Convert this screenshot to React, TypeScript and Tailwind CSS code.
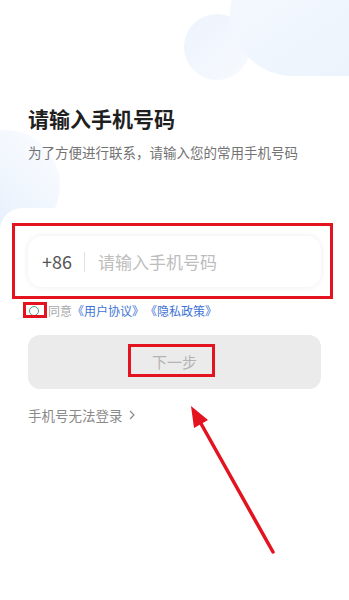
import React from "react";

const font = { fontFamily: '"Noto Sans CJK SC", "Noto Sans", sans-serif' };

export default function App() {
  return (
    <div
      className="relative w-[349px] h-[600px] overflow-hidden bg-white"
      style={font}
    >
      {/* background blobs */}
      <div className="absolute left-[184px] top-[14px] h-[66px] w-[66px] rounded-full bg-gradient-to-br from-[#edf3fd] to-[#f7fafe]" />
      <div className="absolute left-[230px] top-[-50px] h-[126px] w-[190px] rounded-full bg-gradient-to-br from-[#f6fafe] to-[#eaf2fc]" />
      <div className="absolute left-[-50px] top-[130px] h-[110px] w-[110px] rounded-full bg-gradient-to-tr from-[#dbe8fb] via-[#eff5fd] to-[#fbfdff]" />

      <div className="relative px-7 pt-[104px]">
        <h1 className="text-[21px] leading-7 font-bold text-[#1f1f1f]">
          请输入手机号码
        </h1>
        <p className="mt-[10px] text-[13.5px] leading-5 text-[#737373]">
          为了方便进行联系，请输入您的常用手机号码
        </p>
      </div>

      <div className="relative mt-[46px] rounded-tl-[22px] bg-white px-7 pt-7">
        <div className="flex h-[51px] w-[293px] items-center rounded-[14px] bg-white px-[14px] shadow-[0_0_6px_rgba(0,0,0,0.08)]">
          <span className="text-[18px] text-[#555]">+86</span>
          <span className="ml-3 mr-[13px] h-5 w-px bg-[#e0e0e0]" />
          <span className="text-[17px] text-[#bdbdbd]">请输入手机号码</span>
        </div>

        <div className="mt-4 flex h-4 items-center text-[12px]">
          <span className="ml-[1px] h-[10px] w-[10px] rounded-full border border-[#4aa582]" />
          <span className="ml-[9px] text-[#a8a8a8]">同意</span>
          <span className="text-[#3d73d4]">《用户协议》</span>
          <span className="ml-[1px] text-[#3d73d4]">《隐私政策》</span>
        </div>

        <button className="mt-4 flex h-[54px] w-[293px] items-center justify-center rounded-[12px] bg-[#ebebeb] text-[15px] text-[#b3b3b3]">
          下一步
        </button>

        <div className="mt-4 flex items-center text-[13.5px] leading-5 text-[#8a8a8a]">
          手机号无法登录
          <svg width="10" height="12" viewBox="0 0 10 12" className="ml-1">
            <path d="M3 2l4 4-4 4" fill="none" stroke="#8a8a8a" strokeWidth="1.2" />
          </svg>
        </div>
      </div>

      {/* annotations */}
      <div className="absolute left-[12px] top-[223px] h-[76px] w-[321px] border-[3px] border-[#e3131f]" />
      <div className="absolute left-[23px] top-[302px] h-[16px] w-[24px] border-[3px] border-[#e3131f]" />
      <div className="absolute left-[128px] top-[344px] h-[33px] w-[87px] border-[3px] border-[#e3131f]" />
      <svg className="absolute left-0 top-0" width="349" height="600">
        <line x1="273" y1="552" x2="199" y2="420" stroke="#e3131f" strokeWidth="3.5" strokeLinecap="round" />
        <polygon points="191,406 194,428 208,420" fill="#e3131f" />
      </svg>
    </div>
  );
}
